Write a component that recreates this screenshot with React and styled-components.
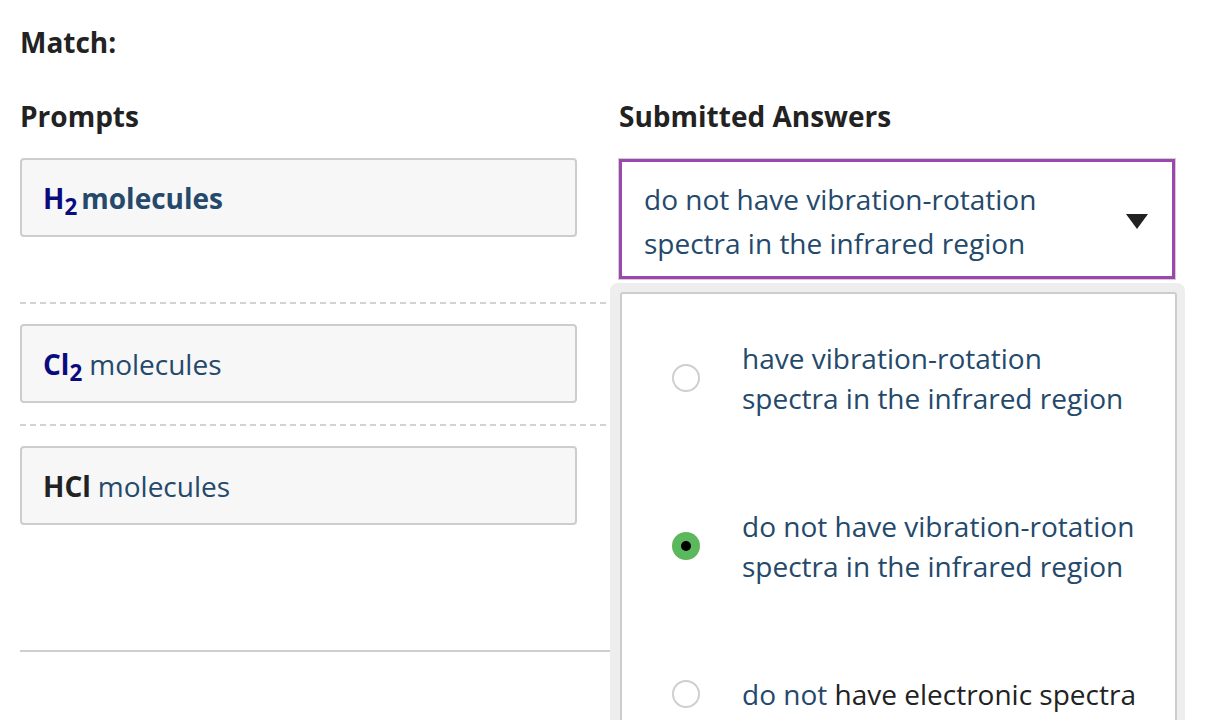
import React from "react";
import styled, { createGlobalStyle } from "styled-components";

const Global = createGlobalStyle`
  html, body { margin: 0; padding: 0; background: #fff; }
  body { font-family: "Open Sans", "Noto Sans", sans-serif; color: #222; }
`;

const Page = styled.div`
  padding: 22px 50px 0 20px;
  width: 1226px;
  height: 720px;
  overflow: hidden;
  box-sizing: border-box;
`;

const Title = styled.h2`
  margin: 0 0 35px;
  font-size: 28px;
  line-height: 40px;
  font-weight: 700;
  color: #222;
`;

const Columns = styled.div`
  display: grid;
  grid-template-columns: 557px 558px;
  column-gap: 41px;
`;

const Heading = styled.h3`
  margin: 0 0 23px;
  font-size: 28px;
  line-height: 38px;
  font-weight: 700;
  color: #222;
  padding-left: ${(p) => (p.$right ? "1px" : "0")};
`;

const Row = styled.div`
  display: grid;
  grid-template-columns: 557px 558px;
  column-gap: 41px;
  align-items: start;
  padding: ${(p) => (p.$first ? "0" : "20px")} 0 ${(p) => (p.$last ? "0" : p.$first ? "22px" : "21px")};
  min-height: ${(p) => (p.$last ? "226px" : "0")};
  box-sizing: border-box;
  border-bottom: ${(p) => (p.$last ? "2px solid #cfcfcf" : "2px dashed #d2d2d2")};
`;

const PromptBox = styled.div`
  height: 79px;
  box-sizing: border-box;
  display: flex;
  align-items: center;
  padding: 0 21px;
  background: #f7f7f7;
  border: 2px solid #cdcdcd;
  border-radius: 4px;
  font-size: 28px;
  color: #24496b;
`;

const Formula = styled.b`
  color: ${(p) => (p.$dark ? "#222" : "#0b0b80")};
  font-weight: 700;
  sub {
    font-size: 0.8em;
    line-height: 0;
    vertical-align: -0.25em;
  }
`;

const Name = styled.span`
  font-weight: ${(p) => (p.$bold ? 700 : 400)};
  margin-left: ${(p) => (p.$tight ? "4px" : "7px")};
`;

const SelectWrap = styled.div`
  position: relative;
`;

const Select = styled.div`
  box-sizing: border-box;
  border: 1px solid #cfcfcf;
  box-shadow: inset 0 0 0 3px #9b47af;
  background: #fff;
  padding: 18px 26px 14px 25px;
  display: flex;
  align-items: center;
  justify-content: space-between;
  font-size: 28px;
  line-height: 44px;
  color: #24496b;
  min-height: 79px;
`;

const Caret = styled.span`
  width: 0;
  height: 0;
  border-left: 11px solid transparent;
  border-right: 11px solid transparent;
  border-top: 15px solid #222;
  margin-right: 1px;
  flex: none;
`;

const Menu = styled.div`
  position: absolute;
  top: calc(100% + 3px);
  left: -8px;
  width: 575px;
  box-sizing: border-box;
  background: #eeeeee;
  border-radius: 8px;
  padding: 9px 8px 12px 10px;
  z-index: 10;
`;

const MenuInner = styled.div`
  background: #fff;
  border: 2px solid #cdcdcd;
  border-radius: 3px;
`;

const Option = styled.div`
  display: flex;
  align-items: center;
  padding: 44px 20px 44px 50px;
  font-size: 28px;
  line-height: 40px;
  color: #24496b;
`;

const Radio = styled.span`
  flex: none;
  width: 28px;
  height: 28px;
  border-radius: 50%;
  box-sizing: border-box;
  margin-right: 42px;
  border: ${(p) => (p.$checked ? "none" : "2px solid #cfcfcf")};
  background: ${(p) => (p.$checked ? "#5cb85c" : "#fff")};
  display: flex;
  align-items: center;
  justify-content: center;
  &::after {
    content: "";
    display: ${(p) => (p.$checked ? "block" : "none")};
    width: 10px;
    height: 10px;
    border-radius: 50%;
    background: #000;
  }
`;

const Dark = styled.span`
  color: #222;
`;

const answers = [
  { id: 1, lines: ["have vibration-rotation", "spectra in the infrared region"] },
  { id: 2, lines: ["do not have vibration-rotation", "spectra in the infrared region"], checked: true },
];

export default function App() {
  return (
    <>
      <Global />
      <Page>
        <Title>Match:</Title>
        <Columns>
          <Heading>Prompts</Heading>
          <Heading $right>Submitted Answers</Heading>
        </Columns>
        <Row $first>
          <PromptBox>
            <Formula>H<sub>2</sub></Formula>
            <Name $bold $tight>molecules</Name>
          </PromptBox>
          <SelectWrap>
            <Select>
              <span>
                do not have vibration-rotation
                <br />
                spectra in the infrared region
              </span>
              <Caret />
            </Select>
            <Menu>
              <MenuInner>
                {answers.map((a) => (
                  <Option key={a.id}>
                    <Radio $checked={a.checked} />
                    <span>
                      {a.lines[0]}
                      <br />
                      {a.lines[1]}
                    </span>
                  </Option>
                ))}
                <Option>
                  <Radio />
                  <span>
                    do not <Dark>have electronic spectra</Dark>
                  </span>
                </Option>
              </MenuInner>
            </Menu>
          </SelectWrap>
        </Row>
        <Row>
          <PromptBox>
            <Formula>Cl<sub>2</sub></Formula>
            <Name>molecules</Name>
          </PromptBox>
          <div />
        </Row>
        <Row $last>
          <PromptBox>
            <Formula $dark>HCl</Formula>
            <Name>molecules</Name>
          </PromptBox>
          <div />
        </Row>
      </Page>
    </>
  );
}
